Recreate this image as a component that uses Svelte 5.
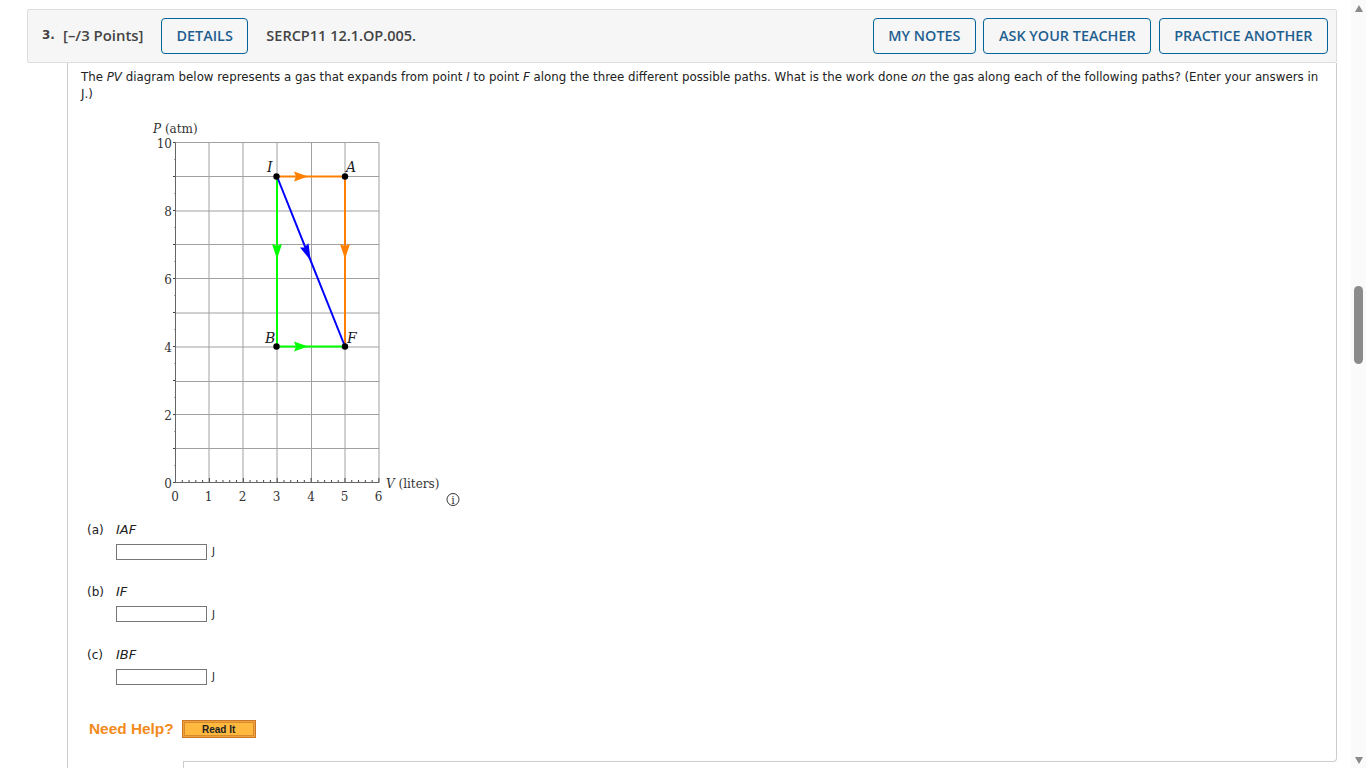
<script lang="ts">
	const parts = [
		{ key: '(a)', path: 'IAF' },
		{ key: '(b)', path: 'IF' },
		{ key: '(c)', path: 'IBF' }
	];

	// page coordinates, the svg viewBox starts at 150,115
	const gridX = [175.5, 209, 243, 277, 311.5, 345, 379];
	const gridY = [482.5, 448.5, 414.5, 381.5, 347, 313, 278.5, 244.5, 211, 176.5, 142.5];
	const yLabels = [0, 2, 4, 6, 8, 10];

	const minorX = Array.from({ length: 31 }, (_, i) => 175.5 + i * 6.78);
	const minorY = Array.from({ length: 21 }, (_, i) => 482.5 - i * 17);

	const right = (x: number, y: number) =>
		`${x},${y - 5} ${x + 14},${y} ${x},${y + 5} ${x + 2},${y}`;
	const down = (x: number, y: number) =>
		`${x - 5},${y} ${x},${y + 15} ${x + 5},${y} ${x},${y + 2}`;
</script>

<div class="page">
	<main class="main">
		<header class="head">
			<span class="num">3.</span>
			<span class="points">[–/3 Points]</span>
			<button class="btn details">DETAILS</button>
			<span class="code">SERCP11 12.1.OP.005.</span>
			<span class="actions">
				<button class="btn">MY NOTES</button>
				<button class="btn">ASK YOUR TEACHER</button>
				<button class="btn">PRACTICE ANOTHER</button>
			</span>
		</header>

		<section class="body">
			<div class="content">
				<p class="question">
					The <i>PV</i> diagram below represents a gas that expands from point <i>I</i> to point <i>F</i> along the three different possible paths. What is the work done <i>on</i> the gas along each of the following paths? (Enter your answers in J.)
				</p>

				<svg class="chart" width="320" height="395" viewBox="150 115 320 395">
					{#each gridX as x}
						<line x1={x} x2={x} y1="142.5" y2="482.5" class="grid" />
					{/each}
					{#each gridY as y}
						<line x1="175.5" x2="379" y1={y} y2={y} class="grid" />
					{/each}

					{#each minorX as x, i}
						<line x1={x} x2={x} y1="482.5" y2={i % 5 === 0 ? 478 : 480} class="tick" />
					{/each}
					{#each minorY as y, i}
						<line x1={i % 2 === 0 ? 173 : 174.5} x2="175.5" y1={y} y2={y} class="tick" />
					{/each}
					<line x1="175.5" x2="379" y1="482.5" y2="482.5" class="axis" />
					<line x1="175.5" x2="175.5" y1="142.5" y2="482.5" class="axis" />

					<text x="153" y="133" class="lab"><tspan class="var">P</tspan> (atm)</text>
					<text x="386" y="488" class="lab"><tspan class="var">V</tspan> (liters)</text>
					{#each yLabels as v}
						<text x="172" y={488 - v * 34} class="lab" text-anchor="end">{v}</text>
					{/each}
					{#each gridX as x, i}
						<text x={x - 0.5} y="501" class="lab" text-anchor="middle">{i}</text>
					{/each}

					<polyline points="277,176.5 345,176.5 345,346.5" class="path orange" />
					<polygon points={right(294, 176.5)} fill="#ff8000" />
					<polygon points={down(345, 244)} fill="#ff8000" />

					<polyline points="277,176.5 277,346.5 345,346.5" class="path green" />
					<polygon points={down(277, 244)} fill="#00ff00" />
					<polygon points={right(294, 346.5)} fill="#00ff00" />

					<line x1="277" y1="176.5" x2="345" y2="346.5" class="path blue" />
					<polygon points="310.7,260.5 300,247.5 304.6,247.5 308.5,243.3" fill="#0000ff" />

					<circle cx="276.5" cy="176.5" r="3.2" />
					<circle cx="345" cy="176.5" r="3.2" />
					<circle cx="276.5" cy="346.5" r="3.2" />
					<circle cx="345" cy="346.5" r="3.2" />

					<text x="267" y="172" class="pt">I</text>
					<text x="346" y="172" class="pt">A</text>
					<text x="265" y="343" class="pt">B</text>
					<text x="347" y="343" class="pt">F</text>

					<circle cx="453" cy="499.5" r="6" class="info" />
					<text x="453" y="504" class="info-i" text-anchor="middle">i</text>
				</svg>

				<div class="parts">
					{#each parts as p}
						<div class="part">
							<div class="part-label"><span class="key">{p.key}</span><i>{p.path}</i></div>
							<div class="answer"><input type="text" /><span>J</span></div>
						</div>
					{/each}
				</div>

				<div class="help">
					<span class="need">Need Help?</span>
					<button class="read"><span>Read It</span></button>
				</div>
			</div>
			<div class="closing"></div>
			<div class="stub"></div>
		</section>
	</main>

	<aside class="scrollbar">
		<span class="arrow up"></span>
		<span class="thumb"></span>
		<span class="arrow dn"></span>
	</aside>
</div>

<style>
	:global(body) {
		margin: 0;
		background: #fff;
	}

	.page {
		display: flex;
		height: 768px;
		overflow: hidden;
	}

	.main {
		flex: 1;
		min-width: 0;
		padding: 9px 14px 0 27px;
	}

	.head {
		display: flex;
		align-items: center;
		box-sizing: border-box;
		height: 54px;
		padding: 0 8px 0 14px;
		background: #f6f6f6;
		border: 1px solid #ddd;
		border-radius: 2px;
		font-family: 'Open Sans', sans-serif;
		font-size: 14.5px;
		font-weight: 600;
		color: #444;
	}

	.num {
		width: 21px;
		padding-bottom: 3px;
		font-family: 'DejaVu Sans', sans-serif;
		font-size: 12px;
		font-weight: 700;
	}

	.points {
		width: 98px;
		padding-bottom: 2px;
		font-size: 14.9px;
	}

	.code {
		margin-left: 18px;
		padding-bottom: 2px;
	}

	.actions {
		display: flex;
		gap: 7.5px;
		margin-left: auto;
	}

	.btn {
		height: 36px;
		padding: 0 14.5px 2px;
		background: transparent;
		border: 1px solid #00639a;
		border-radius: 4px;
		font: inherit;
		font-size: 14.4px;
		color: #1f5f90;
	}

	.body {
		margin-left: 40px;
		border-left: 1px solid #ccc;
		height: 706px;
	}

	.content {
		box-sizing: border-box;
		height: 695px;
		padding: 6px 6px 0 13px;
		border-right: 1px solid #ccc;
		font-family: 'DejaVu Sans', Verdana, sans-serif;
		font-size: 12px;
		color: #222;
	}

	.question {
		margin: 0;
		font-size: 11.82px;
		line-height: 17px;
	}

	.chart {
		display: block;
		margin: 12px 0 0 69px;
	}

	.grid {
		stroke: #a0a0a0;
		stroke-width: 1;
	}

	.tick {
		stroke: #444;
		stroke-width: 1;
	}

	.axis {
		stroke: #666;
		stroke-width: 1;
	}

	.lab {
		font-family: 'DejaVu Serif', serif;
		font-size: 12px;
		fill: #333;
	}

	.var {
		font-style: italic;
	}

	.pt {
		font-family: 'DejaVu Serif', serif;
		font-style: italic;
		font-size: 14px;
		fill: #222;
	}

	.path {
		fill: none;
		stroke-width: 2;
	}

	.orange {
		stroke: #ff8000;
	}

	.green {
		stroke: #00ff00;
	}

	.blue {
		stroke: #0000ff;
	}

	.info {
		fill: none;
		stroke: #333;
	}

	.info-i {
		font-family: 'DejaVu Serif', serif;
		font-size: 11px;
		fill: #333;
	}

	.parts {
		margin: 10.8px 0 0 6px;
	}

	.part {
		height: 62.5px;
	}

	.part-label {
		display: flex;
		height: 18px;
		line-height: 18px;
		align-items: baseline;
	}

	.part-label i {
		font-size: 13px;
	}

	.key {
		width: 29px;
	}

	.answer {
		display: flex;
		align-items: center;
		gap: 5px;
		margin: 5px 0 0 29px;
		font-size: 10px;
	}

	.answer input {
		box-sizing: border-box;
		width: 91px;
		height: 16px;
		padding: 0;
		background: #fff;
		border: 1px solid #767676;
		border-radius: 0;
	}

	.help {
		display: flex;
		align-items: center;
		gap: 8px;
		margin: 12.2px 0 0 8px;
	}

	.need {
		font-family: 'Liberation Sans', Arial, sans-serif;
		font-size: 15.4px;
		font-weight: 700;
		color: #f28a1c;
	}

	.read {
		box-sizing: border-box;
		width: 74px;
		height: 18px;
		padding: 1px;
		background: #f2a03c;
		border: 1px solid #c9782a;
		font-family: 'Liberation Sans', Arial, sans-serif;
		font-size: 10px;
		font-weight: 700;
		color: #222;
	}

	.read span {
		display: block;
		height: 14px;
		box-sizing: border-box;
		line-height: 12px;
		padding-top: 1px;
		background: #ffb93f;
		border: 1px solid #d98c2e;
	}

	.closing {
		box-sizing: border-box;
		height: 4px;
		margin-left: 115px;
		border-right: 1px solid #ccc;
		border-bottom: 1px solid #ccc;
		border-bottom-right-radius: 4px;
	}

	.stub {
		width: 1px;
		height: 7px;
		margin-left: 115px;
		background: #ccc;
	}

	.scrollbar {
		display: flex;
		flex-direction: column;
		align-items: center;
		width: 15px;
		background: #fafafa;
	}

	.arrow {
		width: 0;
		height: 0;
		border-left: 4.5px solid transparent;
		border-right: 4.5px solid transparent;
	}

	.up {
		margin-top: 5px;
		border-bottom: 7px solid #8a8a8a;
	}

	.dn {
		margin-top: auto;
		margin-bottom: 4px;
		border-top: 7px solid #8a8a8a;
	}

	.thumb {
		width: 9px;
		height: 78px;
		margin-top: 274px;
		background: #8b8b8b;
		border-radius: 5px;
	}
</style>
